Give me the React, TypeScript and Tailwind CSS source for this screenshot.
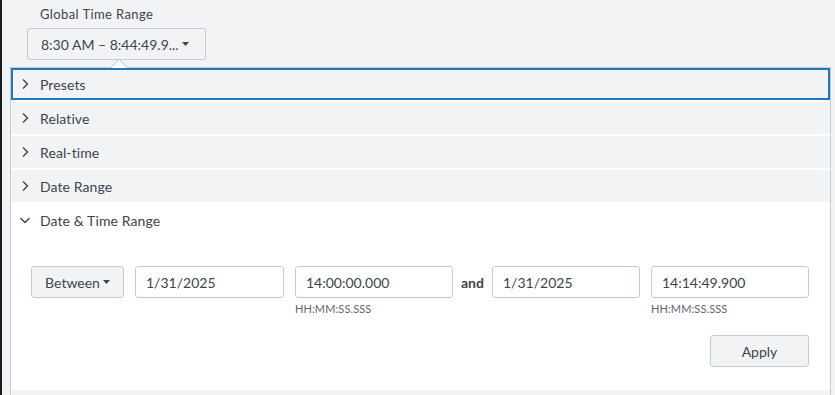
const font = { fontFamily: 'Lato, "Open Sans", sans-serif' };

function Caret({ className = '' }: { className?: string }) {
  return (
    <svg width="7" height="4" viewBox="0 0 7 4" className={className}>
      <path d="M0 0h7L3.5 4z" fill="#3c444d" />
    </svg>
  );
}

function Chevron({ open }: { open?: boolean }) {
  return open ? (
    <svg width="12" height="12" viewBox="0 0 12 12" className="shrink-0">
      <path d="M1.5 4l4.5 4.5L10.5 4" fill="none" stroke="#3c444d" strokeWidth="1.4" />
    </svg>
  ) : (
    <svg width="12" height="12" viewBox="0 0 12 12" className="shrink-0">
      <path d="M4 1.5l4.5 4.5L4 10.5" fill="none" stroke="#3c444d" strokeWidth="1.4" />
    </svg>
  );
}

function Row({ label, focused, open }: { label: string; focused?: boolean; open?: boolean }) {
  return (
    <div
      className={
        'flex items-center h-[32px] gap-[9px] text-[14px] text-[#3c444d] ' +
        (open ? 'bg-white pl-[8px]' : 'bg-[#f2f3f5] pl-[8px]') +
        (focused ? ' border-2 border-[#1f78b8] !pl-[6px]' : '')
      }
    >
      <Chevron open={open} />
      <span className="tracking-[0.1px]">{label}</span>
    </div>
  );
}

function Field({ value, hint, width }: { value: string; hint?: string; width: string }) {
  return (
    <div className={'flex flex-col ' + width}>
      <div className="h-[32px] bg-white border border-[#c3cbd4] rounded-[3px] flex items-center px-[10px] text-[14px] text-[#3c444d]">
        {value}
      </div>
      <div className="h-[37px] pt-[5px] text-[11px] leading-[12px] text-[#5c6773] tracking-[0.1px]">{hint}</div>
    </div>
  );
}

export default function App() {
  return (
    <div className="w-[835px] h-[395px] bg-[#f2f3f5] border-l-2 border-[#1a1c20] overflow-hidden" style={font}>
      <div className="pl-[38px] pt-[6px] text-[13px] leading-[16px] tracking-[0.4px] text-[#3c444d]">Global Time Range</div>
      <div className="pl-[25px] pt-[6px]">
        <div className="w-[179px] h-[32px] bg-[#f2f3f5] border border-[#c3cbd4] rounded-[3px] flex items-center justify-between pl-[13px] pr-[16px] text-[14px] text-[#3c444d]">
          <span>8:30 AM – 8:44:49.9...</span>
          <Caret />
        </div>
      </div>
      <div className="relative mt-[7px] ml-[8px] w-[821px] border-x border-t border-[#c3cbd4] bg-white">
        <div className="absolute -top-[7px] left-[102px] w-[12px] h-[12px] rotate-45 bg-white border-l border-t border-[#c3cbd4]" />
        <div className="relative flex flex-col gap-[2px] bg-white">
          <Row label="Presets" focused />
          <Row label="Relative" />
          <Row label="Real-time" />
          <Row label="Date Range" />
          <Row label="Date & Time Range" open />
        </div>
        <div className="bg-white">
          <div className="flex items-start pl-[20px] pt-[30px]">
            <div className="w-[93px] h-[32px] bg-[#f2f3f5] border border-[#c3cbd4] rounded-[3px] flex items-center justify-center gap-[3px] text-[14px] text-[#3c444d]">
              <span>Between</span>
              <Caret />
            </div>
            <div className="w-[11px]" />
            <Field value="1/31/2025" width="w-[149px]" />
            <div className="w-[11px]" />
            <Field value="14:00:00.000" hint="HH:MM:SS.SSS" width="w-[158px]" />
            <div className="h-[32px] w-[39px] flex items-center justify-center text-[14px] font-bold text-[#3c444d]">and</div>
            <Field value="1/31/2025" width="w-[148px]" />
            <div className="w-[11px]" />
            <Field value="14:14:49.900" hint="HH:MM:SS.SSS" width="w-[158px]" />
          </div>
          <div className="flex justify-end pr-[21px] pb-[23px]">
            <div className="w-[99px] h-[32px] bg-[#f2f3f5] border border-[#c3cbd4] rounded-[3px] flex items-center justify-center text-[14px] text-[#3c444d]">
              Apply
            </div>
          </div>
        </div>
        <div className="h-[40px] bg-[#f2f3f5]" />
      </div>
    </div>
  );
}
